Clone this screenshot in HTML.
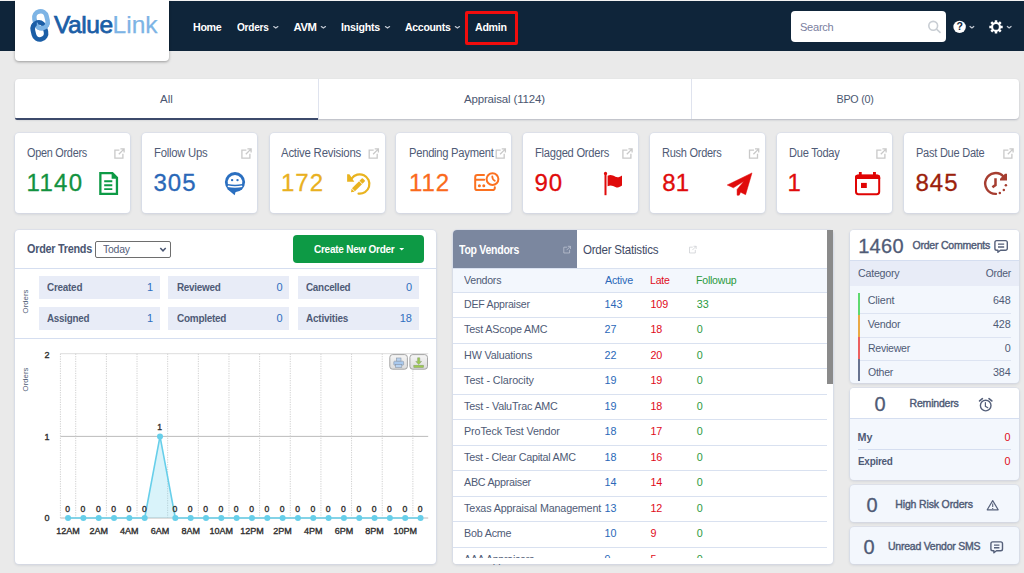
<!DOCTYPE html>
<html lang="en"><head><meta charset="utf-8"><title>ValueLink Dashboard</title>
<style>
html,body{margin:0;padding:0;}
body{width:1024px;height:573px;overflow:hidden;background:#eaeaea;font-family:"Liberation Sans",sans-serif;position:relative;}
.t{position:absolute;white-space:nowrap;}
.b{position:absolute;box-sizing:border-box;}
.card{position:absolute;box-sizing:border-box;background:#fff;border-radius:4px;box-shadow:0 0 0 .6px #d6dceb,0 1px 3px rgba(70,80,110,.2);}
svg{position:absolute;overflow:visible;}
</style></head><body>
<div class="b" style="left:0px;top:0px;width:1024px;height:2px;background:#f3f3f3;"></div>
<div class="b" style="left:0px;top:1.3px;width:1024px;height:50.2px;background:#0f253a;"></div>
<div class="b" style="left:15px;top:0px;width:154px;height:61px;background:#fff;border-radius:0 0 4px 4px;box-shadow:0 1px 3px rgba(0,0,0,.35);"></div>
<div class="b" style="left:465px;top:11px;width:53px;height:34px;border:3px solid #f20d0d;border-radius:2px;"></div>
<div class="b" style="left:791px;top:11px;width:155px;height:30.5px;background:#fff;border-radius:4px;"></div>
<div class="b" style="left:15px;top:79px;width:1004px;height:40px;background:#fff;border-radius:4px;box-shadow:0 1px 2px rgba(60,70,100,.30);"></div>
<div class="b" style="left:15px;top:117.5px;width:303px;height:2px;background:#3c4a6b;border-radius:0 0 0 3px;"></div>
<div class="b" style="left:318px;top:79px;width:1px;height:40px;background:#dfe3ee;"></div>
<div class="b" style="left:690.5px;top:79px;width:1px;height:40px;background:#dfe3ee;"></div>
<div class="card" style="left:15px;top:132.5px;width:115px;height:80.5px;"></div>
<div class="card" style="left:142px;top:132.5px;width:115px;height:80.5px;"></div>
<div class="card" style="left:269.5px;top:132.5px;width:115px;height:80.5px;"></div>
<div class="card" style="left:396px;top:132.5px;width:115px;height:80.5px;"></div>
<div class="card" style="left:523px;top:132.5px;width:115px;height:80.5px;"></div>
<div class="card" style="left:649.5px;top:132.5px;width:115px;height:80.5px;"></div>
<div class="card" style="left:777px;top:132.5px;width:115px;height:80.5px;"></div>
<div class="card" style="left:903.5px;top:132.5px;width:115px;height:80.5px;"></div>
<div class="card" style="left:15px;top:229.5px;width:421px;height:334.5px;"></div>
<div class="b" style="left:15px;top:268px;width:421px;height:1px;background:#d5def0;"></div>
<div class="b" style="left:15px;top:338px;width:421px;height:1px;background:#d5def0;"></div>
<div class="b" style="left:95px;top:241.2px;width:75.7px;height:16.4px;background:#fff;border:1.2px solid #6e6e6e;border-radius:2px;"></div>
<div class="b" style="left:293px;top:235px;width:131px;height:28px;background:#0d9a45;border-radius:4px;"></div>
<div class="b" style="left:38.5px;top:276.3px;width:121.2px;height:23px;background:#e8ecf7;"></div>
<div class="b" style="left:168.2px;top:276.3px;width:121.2px;height:23px;background:#e8ecf7;"></div>
<div class="b" style="left:298.2px;top:276.3px;width:121.2px;height:23px;background:#e8ecf7;"></div>
<div class="b" style="left:38.5px;top:307.1px;width:121.2px;height:23px;background:#e8ecf7;"></div>
<div class="b" style="left:168.2px;top:307.1px;width:121.2px;height:23px;background:#e8ecf7;"></div>
<div class="b" style="left:298.2px;top:307.1px;width:121.2px;height:23px;background:#e8ecf7;"></div>
<div class="card" style="left:453px;top:229.5px;width:380px;height:334.5px;overflow:hidden;"></div>
<div class="b" style="left:453px;top:229.5px;width:124px;height:38.5px;background:#7b879f;border-radius:4px 0 0 0;"></div>
<div class="b" style="left:453px;top:268px;width:374px;height:24.5px;background:#f3f7fd;"></div>
<div class="b" style="left:453px;top:267.6px;width:373.8px;height:1px;background:#d9e1f0;"></div>
<div class="b" style="left:453px;top:291.65px;width:373.8px;height:1px;background:#d9e1f0;"></div>
<div class="b" style="left:453px;top:317.15px;width:373.8px;height:1px;background:#d9e1f0;"></div>
<div class="b" style="left:453px;top:342.65px;width:373.8px;height:1px;background:#d9e1f0;"></div>
<div class="b" style="left:453px;top:368.15px;width:373.8px;height:1px;background:#d9e1f0;"></div>
<div class="b" style="left:453px;top:393.65px;width:373.8px;height:1px;background:#d9e1f0;"></div>
<div class="b" style="left:453px;top:419.15px;width:373.8px;height:1px;background:#d9e1f0;"></div>
<div class="b" style="left:453px;top:444.65px;width:373.8px;height:1px;background:#d9e1f0;"></div>
<div class="b" style="left:453px;top:470.15px;width:373.8px;height:1px;background:#d9e1f0;"></div>
<div class="b" style="left:453px;top:495.65px;width:373.8px;height:1px;background:#d9e1f0;"></div>
<div class="b" style="left:453px;top:521.15px;width:373.8px;height:1px;background:#d9e1f0;"></div>
<div class="b" style="left:453px;top:546.65px;width:373.8px;height:1px;background:#d9e1f0;"></div>
<div class="b" style="left:827px;top:229.5px;width:5.8px;height:154.3px;background:#8a8a8a;"></div>
<div class="card" style="left:850px;top:229.5px;width:169px;height:153px;background:#f3f7fd;"></div>
<div class="b" style="left:850px;top:229.5px;width:169px;height:31px;background:#fff;border-radius:4px 4px 0 0;"></div>
<div class="b" style="left:850px;top:260px;width:169px;height:25.5px;background:#e8ecf7;border-top:1px solid #d5def0;"></div>
<div class="b" style="left:858.2px;top:292.8px;width:2px;height:21.97px;background:#5fd96f;"></div>
<div class="b" style="left:858.2px;top:314.77px;width:2px;height:21.97px;background:#eaa945;"></div>
<div class="b" style="left:858.2px;top:336.74px;width:2px;height:21.97px;background:#ec6060;"></div>
<div class="b" style="left:858.2px;top:358.71000000000004px;width:2px;height:21.97px;background:#677390;"></div>
<div class="b" style="left:860.3px;top:313px;width:150.5px;height:1px;background:#dde4f2;"></div>
<div class="b" style="left:860.3px;top:336.5px;width:150.5px;height:1px;background:#dde4f2;"></div>
<div class="b" style="left:860.3px;top:360.3px;width:150.5px;height:1px;background:#dde4f2;"></div>
<div class="card" style="left:850px;top:388.1px;width:169px;height:91.6px;background:#f3f7fd;"></div>
<div class="b" style="left:850px;top:388.1px;width:169px;height:30.6px;background:#fff;border-radius:4px 4px 0 0;border-bottom:1px solid #d5def0;"></div>
<div class="b" style="left:857.6px;top:449px;width:153px;height:1px;background:#d5def0;"></div>
<div class="card" style="left:850px;top:485px;width:169px;height:36.5px;background:#f3f7fd;"></div>
<div class="card" style="left:850px;top:527px;width:169px;height:37px;background:#f3f7fd;"></div>
<svg width="1024" height="573" viewBox="0 0 1024 573" style="left:0;top:0;"><defs><clipPath id="lk"><path d="M36.8 22.6 H52 V33 H40.5 L36.8 30 Z"/></clipPath></defs><g fill="none" stroke-width="4.6"><path d="M6.2 -2.3 A6.2 6.2 0 0 0 -6.2 -2.3 V2.3 A6.2 6.2 0 0 0 6.2 2.3 Z" stroke="#7db4e5" transform="translate(41 19.75) rotate(-13)"/><path d="M4.89 -6.12 A6.2 6.2 0 0 0 -6.2 -2.3 V2.3 A6.2 6.2 0 0 0 6.2 2.3 V-0.2" stroke="#1b5ea6" stroke-linecap="round" transform="translate(39.4 31) rotate(-13)"/><g clip-path="url(#lk)"><path d="M6.2 -2.3 A6.2 6.2 0 0 0 -6.2 -2.3 V2.3 A6.2 6.2 0 0 0 6.2 2.3 Z" stroke="#7db4e5" transform="translate(41 19.75) rotate(-13)"/></g></g><path d="M273.70 26.55 L275.80 28.05 L277.90 26.55" fill="none" stroke="#c3cad4" stroke-width="1.2" stroke-linecap="round" stroke-linejoin="round"/><path d="M321.30 26.55 L323.40 28.05 L325.50 26.55" fill="none" stroke="#c3cad4" stroke-width="1.2" stroke-linecap="round" stroke-linejoin="round"/><path d="M385.40 26.55 L387.50 28.05 L389.60 26.55" fill="none" stroke="#c3cad4" stroke-width="1.2" stroke-linecap="round" stroke-linejoin="round"/><path d="M455.30 26.55 L457.40 28.05 L459.50 26.55" fill="none" stroke="#c3cad4" stroke-width="1.2" stroke-linecap="round" stroke-linejoin="round"/><path d="M970.05 26.45 L971.90 27.95 L973.75 26.45" fill="none" stroke="#c3cad4" stroke-width="1.2" stroke-linecap="round" stroke-linejoin="round"/><path d="M1007.35 26.45 L1009.20 27.95 L1011.05 26.45" fill="none" stroke="#c3cad4" stroke-width="1.2" stroke-linecap="round" stroke-linejoin="round"/><g fill="none" stroke="#c9ced4" stroke-width="1.6" stroke-linecap="round"><circle cx="933.2" cy="25.8" r="4.4"/><path d="M936.5 29.1 L940 32.4"/></g><circle cx="959.6" cy="26.9" r="6.2" fill="#fff"/><g fill="none" stroke="#fff"><circle cx="996" cy="26.9" r="3.9" stroke-width="2.1"/><path d="M1000.00 26.90 L1002.70 26.90 M998.83 29.73 L1000.74 31.64 M996.00 30.90 L996.00 33.60 M993.17 29.73 L991.26 31.64 M992.00 26.90 L989.30 26.90 M993.17 24.07 L991.26 22.16 M996.00 22.90 L996.00 20.20 M998.83 24.07 L1000.74 22.16 " stroke-width="2.5"/></g><path d="M119.40 150.10 H114.90 V158.10 H122.90 V153.80 M120.40 148.90 H124.10 V152.60 M123.90 149.10 L118.80 154.20" fill="none" stroke="#c9c9c9" stroke-width="1.30"/><path d="M246.40 150.10 H241.90 V158.10 H249.90 V153.80 M247.40 148.90 H251.10 V152.60 M250.90 149.10 L245.80 154.20" fill="none" stroke="#c9c9c9" stroke-width="1.30"/><path d="M373.70 150.10 H369.20 V158.10 H377.20 V153.80 M374.70 148.90 H378.40 V152.60 M378.20 149.10 L373.10 154.20" fill="none" stroke="#c9c9c9" stroke-width="1.30"/><path d="M500.70 150.10 H496.20 V158.10 H504.20 V153.80 M501.70 148.90 H505.40 V152.60 M505.20 149.10 L500.10 154.20" fill="none" stroke="#c9c9c9" stroke-width="1.30"/><path d="M627.40 150.10 H622.90 V158.10 H630.90 V153.80 M628.40 148.90 H632.10 V152.60 M631.90 149.10 L626.80 154.20" fill="none" stroke="#c9c9c9" stroke-width="1.30"/><path d="M754.00 150.10 H749.50 V158.10 H757.50 V153.80 M755.00 148.90 H758.70 V152.60 M758.50 149.10 L753.40 154.20" fill="none" stroke="#c9c9c9" stroke-width="1.30"/><path d="M881.40 150.10 H876.90 V158.10 H884.90 V153.80 M882.40 148.90 H886.10 V152.60 M885.90 149.10 L880.80 154.20" fill="none" stroke="#c9c9c9" stroke-width="1.30"/><path d="M1008.40 150.10 H1003.90 V158.10 H1011.90 V153.80 M1009.40 148.90 H1013.10 V152.60 M1012.90 149.10 L1007.80 154.20" fill="none" stroke="#c9c9c9" stroke-width="1.30"/><path d="M567.06 247.18 H563.81 V252.97 H569.60 V249.85 M567.79 246.31 H570.47 V248.98 M570.32 246.45 L566.63 250.14" fill="none" stroke="#c3c9d6" stroke-width="0.72"/><path d="M692.76 247.18 H689.51 V252.97 H695.30 V249.85 M693.49 246.31 H696.17 V248.98 M696.02 246.45 L692.33 250.14" fill="none" stroke="#c8cbd0" stroke-width="0.72"/><g fill="none" stroke="#0d9a45" stroke-width="2.3"><path d="M100.35 173.1 H112.4 L116.95 177.7 V193.85 H100.35 Z" stroke-linejoin="miter"/><path d="M104.2 181.3 H112.3 M104.2 185.2 H112.3 M104.2 189.1 H112.3" stroke-width="1.9"/></g><path d="M111.6 172.2 L118 178.7 H111.6 Z" fill="#0d9a45"/><g><circle cx="235" cy="182.1" r="10.1" fill="#2a6fc0"/><path d="M226.6 188.6 L234.7 195.2 L235.8 190.8 Z" fill="#2a6fc0"/><path d="M227.9 184 A7.3 7.3 0 1 1 242.1 184 Q235 185.3 227.9 184 Z" fill="#fff"/><circle cx="232.1" cy="180.1" r="1.2" fill="#2a6fc0"/><circle cx="237.5" cy="180.1" r="1.2" fill="#2a6fc0"/><path d="M227.8 186.3 Q235 187.9 242.2 186.3" fill="none" stroke="#fff" stroke-width="1.5"/></g><path d="M351.75 178.44 A9.7 9.7 0 1 1 358.52 193.63" fill="none" stroke="#e9b31f" stroke-width="2.2" stroke-linecap="round"/><path d="M347.1 174.3 H349.4 L354.3 181.8 H347.1 Z" fill="#e9b31f"/><path d="M351.00 192.20 L354.54 191.63 L351.57 188.66 Z" fill="#e9b31f"/><path d="M354.96 191.21 L362.03 184.14 L359.06 181.17 L351.99 188.24 Z" fill="#e9b31f"/><path d="M362.46 183.71 L364.72 181.45 Q365.28 180.88 364.72 180.32 L362.88 178.48 Q362.32 177.92 361.75 178.48 L359.49 180.74 Z" fill="#e9b31f"/><g fill="none" stroke="#fb7120" stroke-width="2" stroke-linecap="round"><path d="M484 175 H477.4 A2.2 2.2 0 0 0 475.2 177.2 V187.9 A2.2 2.2 0 0 0 477.4 190.1 H492.6 A2.2 2.2 0 0 0 494.8 187.9 V187.2"/><path d="M476 179.8 H484.2"/><circle cx="492.5" cy="179.1" r="5.9"/><path d="M492.3 176.4 C492.2 178.6 493.2 179.8 494.8 180.8" stroke-width="1.8"/></g><circle cx="479.4" cy="185.7" r="1.5" fill="#fb7120"/><circle cx="483.8" cy="185.7" r="1.5" fill="#fb7120"/><g fill="#e00b0b"><rect x="604.5" y="173.2" width="2" height="22"/><circle cx="605.5" cy="173.4" r="1.6"/><path d="M607.6 175.8 C610.6 174.2 613 175.6 615.4 176.8 C617.8 177.9 619.8 177 622 175.4 V185.6 C619.8 187.2 617.8 188 615.4 186.9 C613 185.7 610.6 184.6 607.6 186.2 Z"/></g><path d="M752 172.9 L727.2 185 L733.4 187.8 L743.8 181.2 L737.1 189.4 V195.2 H739.2 L740.6 192.2 L745.6 194.7 Z" fill="#e00b0b" stroke="#e00b0b" stroke-width="0.5" stroke-linejoin="round"/><g><rect x="856" y="175.6" width="23.2" height="18.6" rx="2.4" fill="none" stroke="#e00404" stroke-width="2"/><path d="M855 179 V177.4 A2.6 2.6 0 0 1 857.6 174.8 H877.6 A2.6 2.6 0 0 1 880.2 177.4 V179 Z" fill="#e00404"/><rect x="858.9" y="172" width="2.8" height="4" fill="#e00404"/><rect x="873" y="172" width="2.9" height="4" fill="#e00404"/><rect x="861" y="182.9" width="5.8" height="5.1" fill="#e00404"/></g><g fill="none" stroke="#a63d30" stroke-width="2.4"><path d="M1003.57 176.82 A10.4 10.4 0 1 0 995.96 193.89" stroke-linecap="round"/><path d="M995.5 178.2 V185 L992.4 187.3" stroke-width="2.5"/></g><circle cx="999.83" cy="193.00" r="1.25" fill="#a63d30"/><circle cx="1003.80" cy="189.90" r="1.25" fill="#a63d30"/><circle cx="1005.87" cy="185.13" r="1.25" fill="#a63d30"/><path d="M1007 173.7 V180.6 H1000 V178.8 L1005 173.7 Z" fill="#a63d30"/><path d="M160.3 248 L163 250.8 L165.7 248" fill="none" stroke="#4a5672" stroke-width="1.5"/><path d="M399.2 248 H404.2 L401.7 250.6 Z" fill="#fff"/><path d="M996.70 240.60 H1005.50 A1.8 1.8 0 0 1 1007.30 242.40 V248.40 A1.8 1.8 0 0 1 1005.50 250.20 H1000.50 L997.90 252.30 V250.20 H996.70 A1.8 1.8 0 0 1 994.90 248.40 V242.40 A1.8 1.8 0 0 1 996.70 240.60 Z" fill="none" stroke="#55607a" stroke-width="1.4" stroke-linejoin="round"/><path d="M998.00 244.15 H1004.20 M998.00 246.94 H1004.20" fill="none" stroke="#55607a" stroke-width="1.4"/><path d="M992.70 541.90 H1000.70 A1.8 1.8 0 0 1 1002.50 543.70 V548.90 A1.8 1.8 0 0 1 1000.70 550.70 H996.50 L993.90 552.80 V550.70 H992.70 A1.8 1.8 0 0 1 990.90 548.90 V543.70 A1.8 1.8 0 0 1 992.70 541.90 Z" fill="none" stroke="#55607a" stroke-width="1.4" stroke-linejoin="round"/><path d="M994.00 545.16 H999.40 M994.00 547.71 H999.40" fill="none" stroke="#55607a" stroke-width="1.4"/><g fill="none" stroke="#55607a" stroke-width="1.4" stroke-linecap="round"><circle cx="985.7" cy="405.6" r="5.3"/><path d="M985.4 402.6 V406.4 L987.8 407.7" stroke-width="1.2"/><path d="M979.6 400.9 L982.4 398.7 M991.8 400.9 L989 398.7" stroke-width="1.7"/></g><g fill="none" stroke="#55607a" stroke-width="1.15" stroke-linejoin="round"><path d="M992.7 500.6 L998.2 509.8 H987.2 Z"/><path d="M992.7 503.6 V507" stroke-width="1.1"/><path d="M992.7 508 V508.9" stroke-width="1.1"/></g></svg>
<div class="t" style="left:956.4px;top:20.3px;font-size:10.5px;line-height:13px;font-weight:700;color:#0f253a;width:6.4px;text-align:center;">?</div>
<svg width="1024" height="573" viewBox="0 0 1024 573" style="left:0;top:0;"><path d="M60.4 353.7 H428.2" stroke="#dddddd" stroke-width="1" fill="none"/><path d="M60.4 436.4 H428.2" stroke="#b4b4b4" stroke-width="0.9" fill="none"/><path d="M60.4 518.0 H428.2" stroke="#b4b4b4" stroke-width="0.9" fill="none"/><path d="M60.4 353.7 V518.0 M75.72 353.7 V518.0 M106.38 353.7 V518.0 M137.03 353.7 V518.0 M167.68 353.7 V518.0 M198.33 353.7 V518.0 M228.98 353.7 V518.0 M259.62 353.7 V518.0 M290.28 353.7 V518.0 M320.93 353.7 V518.0 M351.57 353.7 V518.0 M382.23 353.7 V518.0 M412.88 353.7 V518.0 " stroke="#cfcfcf" stroke-width="1" stroke-dasharray="1.2 1.2" fill="none"/><polygon points="68.06,518.0 68.06,518.00 83.39,518.00 98.71,518.00 114.04,518.00 129.36,518.00 144.69,518.00 160.01,436.40 175.34,518.00 190.66,518.00 205.99,518.00 221.31,518.00 236.64,518.00 251.96,518.00 267.29,518.00 282.61,518.00 297.94,518.00 313.26,518.00 328.59,518.00 343.91,518.00 359.24,518.00 374.56,518.00 389.89,518.00 405.21,518.00 420.54,518.00 420.54,518.0" fill="#67cfea" fill-opacity="0.25"/><polyline points="68.06,518.00 83.39,518.00 98.71,518.00 114.04,518.00 129.36,518.00 144.69,518.00 160.01,436.40 175.34,518.00 190.66,518.00 205.99,518.00 221.31,518.00 236.64,518.00 251.96,518.00 267.29,518.00 282.61,518.00 297.94,518.00 313.26,518.00 328.59,518.00 343.91,518.00 359.24,518.00 374.56,518.00 389.89,518.00 405.21,518.00 420.54,518.00" fill="none" stroke="#67cfea" stroke-width="1.6" stroke-linejoin="round"/><circle cx="68.06" cy="518.00" r="3" fill="#67cfea"/><circle cx="83.39" cy="518.00" r="3" fill="#67cfea"/><circle cx="98.71" cy="518.00" r="3" fill="#67cfea"/><circle cx="114.04" cy="518.00" r="3" fill="#67cfea"/><circle cx="129.36" cy="518.00" r="3" fill="#67cfea"/><circle cx="144.69" cy="518.00" r="3" fill="#67cfea"/><circle cx="160.01" cy="436.40" r="3" fill="#67cfea"/><circle cx="175.34" cy="518.00" r="3" fill="#67cfea"/><circle cx="190.66" cy="518.00" r="3" fill="#67cfea"/><circle cx="205.99" cy="518.00" r="3" fill="#67cfea"/><circle cx="221.31" cy="518.00" r="3" fill="#67cfea"/><circle cx="236.64" cy="518.00" r="3" fill="#67cfea"/><circle cx="251.96" cy="518.00" r="3" fill="#67cfea"/><circle cx="267.29" cy="518.00" r="3" fill="#67cfea"/><circle cx="282.61" cy="518.00" r="3" fill="#67cfea"/><circle cx="297.94" cy="518.00" r="3" fill="#67cfea"/><circle cx="313.26" cy="518.00" r="3" fill="#67cfea"/><circle cx="328.59" cy="518.00" r="3" fill="#67cfea"/><circle cx="343.91" cy="518.00" r="3" fill="#67cfea"/><circle cx="359.24" cy="518.00" r="3" fill="#67cfea"/><circle cx="374.56" cy="518.00" r="3" fill="#67cfea"/><circle cx="389.89" cy="518.00" r="3" fill="#67cfea"/><circle cx="405.21" cy="518.00" r="3" fill="#67cfea"/><circle cx="420.54" cy="518.00" r="3" fill="#67cfea"/><text x="67.66" y="512.00" font-size="8.6" text-anchor="middle" font-family="Liberation Sans, sans-serif" fill="#2e2e2e" stroke="#2e2e2e" stroke-width="0.35">0</text><text x="82.99" y="512.00" font-size="8.6" text-anchor="middle" font-family="Liberation Sans, sans-serif" fill="#2e2e2e" stroke="#2e2e2e" stroke-width="0.35">0</text><text x="98.31" y="512.00" font-size="8.6" text-anchor="middle" font-family="Liberation Sans, sans-serif" fill="#2e2e2e" stroke="#2e2e2e" stroke-width="0.35">0</text><text x="113.64" y="512.00" font-size="8.6" text-anchor="middle" font-family="Liberation Sans, sans-serif" fill="#2e2e2e" stroke="#2e2e2e" stroke-width="0.35">0</text><text x="128.96" y="512.00" font-size="8.6" text-anchor="middle" font-family="Liberation Sans, sans-serif" fill="#2e2e2e" stroke="#2e2e2e" stroke-width="0.35">0</text><text x="144.29" y="512.00" font-size="8.6" text-anchor="middle" font-family="Liberation Sans, sans-serif" fill="#2e2e2e" stroke="#2e2e2e" stroke-width="0.35">0</text><text x="159.61" y="430.40" font-size="8.6" text-anchor="middle" font-family="Liberation Sans, sans-serif" fill="#2e2e2e" stroke="#2e2e2e" stroke-width="0.35">1</text><text x="174.94" y="512.00" font-size="8.6" text-anchor="middle" font-family="Liberation Sans, sans-serif" fill="#2e2e2e" stroke="#2e2e2e" stroke-width="0.35">0</text><text x="190.26" y="512.00" font-size="8.6" text-anchor="middle" font-family="Liberation Sans, sans-serif" fill="#2e2e2e" stroke="#2e2e2e" stroke-width="0.35">0</text><text x="205.59" y="512.00" font-size="8.6" text-anchor="middle" font-family="Liberation Sans, sans-serif" fill="#2e2e2e" stroke="#2e2e2e" stroke-width="0.35">0</text><text x="220.91" y="512.00" font-size="8.6" text-anchor="middle" font-family="Liberation Sans, sans-serif" fill="#2e2e2e" stroke="#2e2e2e" stroke-width="0.35">0</text><text x="236.24" y="512.00" font-size="8.6" text-anchor="middle" font-family="Liberation Sans, sans-serif" fill="#2e2e2e" stroke="#2e2e2e" stroke-width="0.35">0</text><text x="251.56" y="512.00" font-size="8.6" text-anchor="middle" font-family="Liberation Sans, sans-serif" fill="#2e2e2e" stroke="#2e2e2e" stroke-width="0.35">0</text><text x="266.89" y="512.00" font-size="8.6" text-anchor="middle" font-family="Liberation Sans, sans-serif" fill="#2e2e2e" stroke="#2e2e2e" stroke-width="0.35">0</text><text x="282.21" y="512.00" font-size="8.6" text-anchor="middle" font-family="Liberation Sans, sans-serif" fill="#2e2e2e" stroke="#2e2e2e" stroke-width="0.35">0</text><text x="297.54" y="512.00" font-size="8.6" text-anchor="middle" font-family="Liberation Sans, sans-serif" fill="#2e2e2e" stroke="#2e2e2e" stroke-width="0.35">0</text><text x="312.86" y="512.00" font-size="8.6" text-anchor="middle" font-family="Liberation Sans, sans-serif" fill="#2e2e2e" stroke="#2e2e2e" stroke-width="0.35">0</text><text x="328.19" y="512.00" font-size="8.6" text-anchor="middle" font-family="Liberation Sans, sans-serif" fill="#2e2e2e" stroke="#2e2e2e" stroke-width="0.35">0</text><text x="343.51" y="512.00" font-size="8.6" text-anchor="middle" font-family="Liberation Sans, sans-serif" fill="#2e2e2e" stroke="#2e2e2e" stroke-width="0.35">0</text><text x="358.84" y="512.00" font-size="8.6" text-anchor="middle" font-family="Liberation Sans, sans-serif" fill="#2e2e2e" stroke="#2e2e2e" stroke-width="0.35">0</text><text x="374.16" y="512.00" font-size="8.6" text-anchor="middle" font-family="Liberation Sans, sans-serif" fill="#2e2e2e" stroke="#2e2e2e" stroke-width="0.35">0</text><text x="389.49" y="512.00" font-size="8.6" text-anchor="middle" font-family="Liberation Sans, sans-serif" fill="#2e2e2e" stroke="#2e2e2e" stroke-width="0.35">0</text><text x="404.81" y="512.00" font-size="8.6" text-anchor="middle" font-family="Liberation Sans, sans-serif" fill="#2e2e2e" stroke="#2e2e2e" stroke-width="0.35">0</text><text x="420.14" y="512.00" font-size="8.6" text-anchor="middle" font-family="Liberation Sans, sans-serif" fill="#2e2e2e" stroke="#2e2e2e" stroke-width="0.35">0</text><text x="68.06" y="534" font-size="9" text-anchor="middle" font-family="Liberation Sans, sans-serif" fill="#2e2e2e" stroke="#2e2e2e" stroke-width="0.35">12AM</text><text x="98.71" y="534" font-size="9" text-anchor="middle" font-family="Liberation Sans, sans-serif" fill="#2e2e2e" stroke="#2e2e2e" stroke-width="0.35">2AM</text><text x="129.36" y="534" font-size="9" text-anchor="middle" font-family="Liberation Sans, sans-serif" fill="#2e2e2e" stroke="#2e2e2e" stroke-width="0.35">4AM</text><text x="160.01" y="534" font-size="9" text-anchor="middle" font-family="Liberation Sans, sans-serif" fill="#2e2e2e" stroke="#2e2e2e" stroke-width="0.35">6AM</text><text x="190.66" y="534" font-size="9" text-anchor="middle" font-family="Liberation Sans, sans-serif" fill="#2e2e2e" stroke="#2e2e2e" stroke-width="0.35">8AM</text><text x="221.31" y="534" font-size="9" text-anchor="middle" font-family="Liberation Sans, sans-serif" fill="#2e2e2e" stroke="#2e2e2e" stroke-width="0.35">10AM</text><text x="251.96" y="534" font-size="9" text-anchor="middle" font-family="Liberation Sans, sans-serif" fill="#2e2e2e" stroke="#2e2e2e" stroke-width="0.35">12PM</text><text x="282.61" y="534" font-size="9" text-anchor="middle" font-family="Liberation Sans, sans-serif" fill="#2e2e2e" stroke="#2e2e2e" stroke-width="0.35">2PM</text><text x="313.26" y="534" font-size="9" text-anchor="middle" font-family="Liberation Sans, sans-serif" fill="#2e2e2e" stroke="#2e2e2e" stroke-width="0.35">4PM</text><text x="343.91" y="534" font-size="9" text-anchor="middle" font-family="Liberation Sans, sans-serif" fill="#2e2e2e" stroke="#2e2e2e" stroke-width="0.35">6PM</text><text x="374.56" y="534" font-size="9" text-anchor="middle" font-family="Liberation Sans, sans-serif" fill="#2e2e2e" stroke="#2e2e2e" stroke-width="0.35">8PM</text><text x="405.21" y="534" font-size="9" text-anchor="middle" font-family="Liberation Sans, sans-serif" fill="#2e2e2e" stroke="#2e2e2e" stroke-width="0.35">10PM</text><text x="49.4" y="357.90" font-size="9" text-anchor="end" font-family="Liberation Sans, sans-serif" fill="#2e2e2e" stroke="#2e2e2e" stroke-width="0.35">2</text><text x="49.4" y="439.60" font-size="9" text-anchor="end" font-family="Liberation Sans, sans-serif" fill="#2e2e2e" stroke="#2e2e2e" stroke-width="0.35">1</text><text x="49.4" y="521.20" font-size="9" text-anchor="end" font-family="Liberation Sans, sans-serif" fill="#2e2e2e" stroke="#2e2e2e" stroke-width="0.35">0</text><defs><linearGradient id="bg1" x1="0" y1="0" x2="0" y2="1"><stop offset="0" stop-color="#f6f6f6"/><stop offset="1" stop-color="#dcdcdc"/></linearGradient></defs><rect x="389.8" y="354.6" width="17.6" height="14.6" rx="2.8" fill="url(#bg1)" stroke="#9c9c9c" stroke-width="0.9"/><rect x="409.9" y="354.6" width="17.6" height="14.6" rx="2.8" fill="url(#bg1)" stroke="#9c9c9c" stroke-width="0.9"/><g stroke="#8a96a6" stroke-width="0.6"><rect x="396.4" y="358" width="4.6" height="3.4" fill="#b9d3f0"/><rect x="393.8" y="361.2" width="9.8" height="4" rx="0.8" fill="#a9c9ee"/><rect x="395.6" y="364.6" width="6.2" height="2.8" fill="#b9d3f0"/></g><g fill="#9ccb4e" stroke="#8a9a7a" stroke-width="0.5"><path d="M417.6 357.8 H419.8 V361.4 H421.6 L418.7 364.6 L415.8 361.4 H417.6 Z"/><rect x="413.8" y="365.2" width="9.8" height="2.4"/></g></svg>
<div class="t" id="t0" style="top:19.00px;font-size:11.25px;line-height:16px;color:#ffffff;font-weight:700;letter-spacing:-0.352px;left:192.60px;transform-origin:0 50%;transform:scaleX(0.9511);">Home</div>
<div class="t" id="t1" style="top:19.00px;font-size:11.25px;line-height:16px;color:#ffffff;font-weight:700;letter-spacing:-0.277px;left:236.80px;transform-origin:0 50%;transform:scaleX(0.8937);">Orders</div>
<div class="t" id="t2" style="top:19.00px;font-size:11.25px;line-height:16px;color:#ffffff;font-weight:700;letter-spacing:-0.391px;left:293.60px;">AVM</div>
<div class="t" id="t3" style="top:19.00px;font-size:11.25px;line-height:16px;color:#ffffff;font-weight:700;letter-spacing:-0.243px;left:341.40px;transform-origin:0 50%;transform:scaleX(0.9466);">Insights</div>
<div class="t" id="t4" style="top:19.00px;font-size:11.25px;line-height:16px;color:#ffffff;font-weight:700;letter-spacing:-0.288px;left:405.00px;transform-origin:0 50%;transform:scaleX(0.9294);">Accounts</div>
<div class="t" id="t5" style="top:19.00px;font-size:11.25px;line-height:16px;color:#ffffff;font-weight:700;letter-spacing:-0.315px;left:475.40px;transform-origin:0 50%;transform:scaleX(0.9454);">Admin</div>
<div class="t" id="t6" style="top:19.00px;font-size:11.5px;line-height:16px;color:#7a80a0;letter-spacing:-0.273px;left:800.00px;transform-origin:0 50%;transform:scaleX(0.9627);">Search</div>
<div class="t" id="t7" style="top:8.30px;font-size:24.5px;line-height:34px;color:#1b5ea6;letter-spacing:-0.409px;left:54.00px;-webkit-text-stroke:0.75px #1b5ea6;">Value</div>
<div class="t" id="t8" style="top:8.30px;font-size:24.5px;line-height:34px;color:#7db4e5;letter-spacing:0.012px;left:112.60px;-webkit-text-stroke:0.25px #7db4e5;">Link</div>
<div class="t" id="t9" style="top:90.90px;font-size:11.5px;line-height:16px;color:#4b5771;left:166.50px;transform:translateX(-50%);">All</div>
<div class="t" id="t10" style="top:90.90px;font-size:11.5px;line-height:16px;color:#4b5771;letter-spacing:-0.158px;left:504.50px;transform:translateX(-50%);margin-left:-0.08px;">Appraisal (1124)</div>
<div class="t" id="t11" style="top:90.90px;font-size:11.5px;line-height:16px;color:#4b5771;letter-spacing:-0.267px;left:855.00px;transform:translateX(-50%) scaleX(0.9325);margin-left:-0.13px;">BPO (0)</div>
<div class="t" id="t12" style="top:144.50px;font-size:12px;line-height:17px;color:#4f5b76;letter-spacing:-0.284px;left:27.00px;transform-origin:0 50%;transform:scaleX(0.9056);">Open Orders</div>
<div class="t" id="t13" style="top:165.80px;font-size:24px;line-height:34px;color:#13923f;left:26.60px;letter-spacing:1.3px;-webkit-text-stroke:0.3px #13923f;">1140</div>
<div class="t" id="t14" style="top:144.50px;font-size:12px;line-height:17px;color:#4f5b76;letter-spacing:-0.267px;left:154.00px;transform-origin:0 50%;transform:scaleX(0.9438);">Follow Ups</div>
<div class="t" id="t15" style="top:165.80px;font-size:24px;line-height:34px;color:#2a68b8;left:153.50px;letter-spacing:1px;-webkit-text-stroke:0.3px #2a68b8;">305</div>
<div class="t" id="t16" style="top:144.50px;font-size:12px;line-height:17px;color:#4f5b76;letter-spacing:-0.248px;left:281.00px;transform-origin:0 50%;transform:scaleX(0.9516);">Active Revisions</div>
<div class="t" id="t17" style="top:165.80px;font-size:24px;line-height:34px;color:#e9b020;left:281.00px;letter-spacing:1px;-webkit-text-stroke:0.3px #e9b020;">172</div>
<div class="t" id="t18" style="top:144.50px;font-size:12px;line-height:17px;color:#4f5b76;letter-spacing:-0.284px;left:408.50px;transform-origin:0 50%;transform:scaleX(0.9340);">Pending Payment</div>
<div class="t" id="t19" style="top:165.80px;font-size:24px;line-height:34px;color:#fa6a1c;left:408.90px;letter-spacing:1px;-webkit-text-stroke:0.3px #fa6a1c;">112</div>
<div class="t" id="t20" style="top:144.50px;font-size:12px;line-height:17px;color:#4f5b76;letter-spacing:-0.268px;left:535.00px;transform-origin:0 50%;transform:scaleX(0.9294);">Flagged Orders</div>
<div class="t" id="t21" style="top:165.80px;font-size:24px;line-height:34px;color:#e00b0b;left:534.50px;letter-spacing:1px;-webkit-text-stroke:0.3px #e00b0b;">90</div>
<div class="t" id="t22" style="top:144.50px;font-size:12px;line-height:17px;color:#4f5b76;letter-spacing:-0.278px;left:662.00px;transform-origin:0 50%;transform:scaleX(0.9158);">Rush Orders</div>
<div class="t" id="t23" style="top:165.80px;font-size:24px;line-height:34px;color:#e00b0b;left:662.20px;letter-spacing:0.2px;-webkit-text-stroke:0.3px #e00b0b;">81</div>
<div class="t" id="t24" style="top:144.50px;font-size:12px;line-height:17px;color:#4f5b76;letter-spacing:-0.286px;left:789.00px;transform-origin:0 50%;transform:scaleX(0.9252);">Due Today</div>
<div class="t" id="t25" style="top:165.80px;font-size:24px;line-height:34px;color:#e00b0b;left:787.50px;letter-spacing:1px;-webkit-text-stroke:0.3px #e00b0b;">1</div>
<div class="t" id="t26" style="top:144.50px;font-size:12px;line-height:17px;color:#4f5b76;letter-spacing:-0.270px;left:916.00px;transform-origin:0 50%;transform:scaleX(0.9190);">Past Due Date</div>
<div class="t" id="t27" style="top:165.80px;font-size:24px;line-height:34px;color:#9c1f0c;left:915.50px;letter-spacing:1px;-webkit-text-stroke:0.3px #9c1f0c;">845</div>
<div class="t" id="t28" style="top:240.80px;font-size:12px;line-height:17px;color:#4b5773;font-weight:700;letter-spacing:-0.283px;left:27.00px;transform-origin:0 50%;transform:scaleX(0.9032);">Order Trends</div>
<div class="t" id="t29" style="top:242.40px;font-size:11px;line-height:15px;color:#55607a;letter-spacing:-0.264px;left:103.30px;transform-origin:0 50%;transform:scaleX(0.9523);">Today</div>
<div class="t" id="t30" style="top:241.00px;font-size:11.5px;line-height:16px;color:#fff;font-weight:700;letter-spacing:-0.273px;left:313.50px;transform-origin:0 50%;transform:scaleX(0.8676);">Create New Order</div>
<div class="t" id="t31" style="top:280.00px;font-size:11px;line-height:15px;color:#4f5b76;font-weight:700;letter-spacing:-0.263px;left:47.00px;transform-origin:0 50%;transform:scaleX(0.8997);">Created</div>
<div class="t" id="t32" style="top:280.00px;font-size:11px;line-height:15px;color:#2f6fc0;right:871.00px;">1</div>
<div class="t" id="t33" style="top:280.00px;font-size:11px;line-height:15px;color:#4f5b76;font-weight:700;letter-spacing:-0.285px;left:176.50px;transform-origin:0 50%;transform:scaleX(0.8975);">Reviewed</div>
<div class="t" id="t34" style="top:280.00px;font-size:11px;line-height:15px;color:#2f6fc0;right:741.50px;">0</div>
<div class="t" id="t35" style="top:280.00px;font-size:11px;line-height:15px;color:#4f5b76;font-weight:700;letter-spacing:-0.260px;left:306.00px;transform-origin:0 50%;transform:scaleX(0.8946);">Cancelled</div>
<div class="t" id="t36" style="top:280.00px;font-size:11px;line-height:15px;color:#2f6fc0;right:612.00px;">0</div>
<div class="t" id="t37" style="top:310.80px;font-size:11px;line-height:15px;color:#4f5b76;font-weight:700;letter-spacing:-0.279px;left:47.00px;transform-origin:0 50%;transform:scaleX(0.8924);">Assigned</div>
<div class="t" id="t38" style="top:310.80px;font-size:11px;line-height:15px;color:#2f6fc0;right:871.00px;">1</div>
<div class="t" id="t39" style="top:310.80px;font-size:11px;line-height:15px;color:#4f5b76;font-weight:700;letter-spacing:-0.284px;left:176.50px;transform-origin:0 50%;transform:scaleX(0.9063);">Completed</div>
<div class="t" id="t40" style="top:310.80px;font-size:11px;line-height:15px;color:#2f6fc0;right:741.50px;">0</div>
<div class="t" id="t41" style="top:310.80px;font-size:11px;line-height:15px;color:#4f5b76;font-weight:700;letter-spacing:-0.220px;left:306.00px;transform-origin:0 50%;transform:scaleX(0.9032);">Activities</div>
<div class="t" id="t42" style="top:310.80px;font-size:11px;line-height:15px;color:#2f6fc0;right:612.00px;">18</div>
<div class="t" id="t43" style="top:295.50px;font-size:7.8px;line-height:11px;color:#4f5b76;left:25.20px;transform:translateX(-50%);transform:translateX(-50%) rotate(-90deg);">Orders</div>
<div class="t" id="t44" style="top:373.50px;font-size:7.8px;line-height:11px;color:#4f5b76;left:25.20px;transform:translateX(-50%);transform:translateX(-50%) rotate(-90deg);">Orders</div>
<div class="t" id="t45" style="top:241.50px;font-size:12px;line-height:17px;color:#fff;font-weight:700;letter-spacing:-0.294px;left:458.80px;transform-origin:0 50%;transform:scaleX(0.8751);">Top Vendors</div>
<div class="t" id="t46" style="top:241.00px;font-size:13px;line-height:18px;color:#3f4b66;letter-spacing:-0.250px;left:583.30px;transform-origin:0 50%;transform:scaleX(0.8873);">Order Statistics</div>
<div class="t" id="t47" style="top:271.90px;font-size:11.25px;line-height:16px;color:#4f5b76;letter-spacing:-0.265px;left:464.10px;transform-origin:0 50%;transform:scaleX(0.9436);">Vendors</div>
<div class="t" id="t48" style="top:271.90px;font-size:11.25px;line-height:16px;color:#2a68b8;letter-spacing:-0.230px;left:604.90px;transform-origin:0 50%;transform:scaleX(0.9535);">Active</div>
<div class="t" id="t49" style="top:271.90px;font-size:11.25px;line-height:16px;color:#e00b1a;letter-spacing:-0.246px;left:650.40px;transform-origin:0 50%;transform:scaleX(0.9369);">Late</div>
<div class="t" id="t50" style="top:271.90px;font-size:11.25px;line-height:16px;color:#2b9a3e;letter-spacing:-0.253px;left:696.40px;transform-origin:0 50%;transform:scaleX(0.9418);">Followup</div>
<div class="t" id="t51" style="top:297.00px;font-size:10.75px;line-height:15px;color:#4f5b76;letter-spacing:-0.242px;left:464.10px;transform-origin:0 50%;transform:scaleX(0.9841);">DEF Appraiser</div>
<div class="t" id="t52" style="top:297.00px;font-size:10.75px;line-height:15px;color:#2a68b8;left:604.50px;">143</div>
<div class="t" id="t53" style="top:297.00px;font-size:10.75px;line-height:15px;color:#e00b1a;left:650.40px;">109</div>
<div class="t" id="t54" style="top:297.00px;font-size:10.75px;line-height:15px;color:#2b9a3e;left:696.70px;">33</div>
<div class="t" id="t55" style="top:322.47px;font-size:10.75px;line-height:15px;color:#4f5b76;letter-spacing:-0.183px;left:464.10px;">Test AScope AMC</div>
<div class="t" id="t56" style="top:322.47px;font-size:10.75px;line-height:15px;color:#2a68b8;left:604.50px;">27</div>
<div class="t" id="t57" style="top:322.47px;font-size:10.75px;line-height:15px;color:#e00b1a;left:650.40px;">18</div>
<div class="t" id="t58" style="top:322.47px;font-size:10.75px;line-height:15px;color:#2b9a3e;left:696.70px;">0</div>
<div class="t" id="t59" style="top:347.94px;font-size:10.75px;line-height:15px;color:#4f5b76;letter-spacing:-0.178px;left:464.10px;">HW Valuations</div>
<div class="t" id="t60" style="top:347.94px;font-size:10.75px;line-height:15px;color:#2a68b8;left:604.50px;">22</div>
<div class="t" id="t61" style="top:347.94px;font-size:10.75px;line-height:15px;color:#e00b1a;left:650.40px;">20</div>
<div class="t" id="t62" style="top:347.94px;font-size:10.75px;line-height:15px;color:#2b9a3e;left:696.70px;">0</div>
<div class="t" id="t63" style="top:373.41px;font-size:10.75px;line-height:15px;color:#4f5b76;letter-spacing:-0.081px;left:464.10px;">Test - Clarocity</div>
<div class="t" id="t64" style="top:373.41px;font-size:10.75px;line-height:15px;color:#2a68b8;left:604.50px;">19</div>
<div class="t" id="t65" style="top:373.41px;font-size:10.75px;line-height:15px;color:#e00b1a;left:650.40px;">19</div>
<div class="t" id="t66" style="top:373.41px;font-size:10.75px;line-height:15px;color:#2b9a3e;left:696.70px;">0</div>
<div class="t" id="t67" style="top:398.88px;font-size:10.75px;line-height:15px;color:#4f5b76;letter-spacing:-0.199px;left:464.10px;">Test - ValuTrac AMC</div>
<div class="t" id="t68" style="top:398.88px;font-size:10.75px;line-height:15px;color:#2a68b8;left:604.50px;">19</div>
<div class="t" id="t69" style="top:398.88px;font-size:10.75px;line-height:15px;color:#e00b1a;left:650.40px;">18</div>
<div class="t" id="t70" style="top:398.88px;font-size:10.75px;line-height:15px;color:#2b9a3e;left:696.70px;">0</div>
<div class="t" id="t71" style="top:424.35px;font-size:10.75px;line-height:15px;color:#4f5b76;letter-spacing:-0.148px;left:464.10px;">ProTeck Test Vendor</div>
<div class="t" id="t72" style="top:424.35px;font-size:10.75px;line-height:15px;color:#2a68b8;left:604.50px;">18</div>
<div class="t" id="t73" style="top:424.35px;font-size:10.75px;line-height:15px;color:#e00b1a;left:650.40px;">17</div>
<div class="t" id="t74" style="top:424.35px;font-size:10.75px;line-height:15px;color:#2b9a3e;left:696.70px;">0</div>
<div class="t" id="t75" style="top:449.82px;font-size:10.75px;line-height:15px;color:#4f5b76;letter-spacing:-0.254px;left:464.10px;">Test - Clear Capital AMC</div>
<div class="t" id="t76" style="top:449.82px;font-size:10.75px;line-height:15px;color:#2a68b8;left:604.50px;">18</div>
<div class="t" id="t77" style="top:449.82px;font-size:10.75px;line-height:15px;color:#e00b1a;left:650.40px;">16</div>
<div class="t" id="t78" style="top:449.82px;font-size:10.75px;line-height:15px;color:#2b9a3e;left:696.70px;">0</div>
<div class="t" id="t79" style="top:475.29px;font-size:10.75px;line-height:15px;color:#4f5b76;letter-spacing:-0.286px;left:464.10px;">ABC Appraiser</div>
<div class="t" id="t80" style="top:475.29px;font-size:10.75px;line-height:15px;color:#2a68b8;left:604.50px;">14</div>
<div class="t" id="t81" style="top:475.29px;font-size:10.75px;line-height:15px;color:#e00b1a;left:650.40px;">14</div>
<div class="t" id="t82" style="top:475.29px;font-size:10.75px;line-height:15px;color:#2b9a3e;left:696.70px;">0</div>
<div class="t" id="t83" style="top:500.76px;font-size:10.75px;line-height:15px;color:#4f5b76;letter-spacing:-0.155px;left:464.10px;">Texas Appraisal Management</div>
<div class="t" id="t84" style="top:500.76px;font-size:10.75px;line-height:15px;color:#2a68b8;left:604.50px;">13</div>
<div class="t" id="t85" style="top:500.76px;font-size:10.75px;line-height:15px;color:#e00b1a;left:650.40px;">12</div>
<div class="t" id="t86" style="top:500.76px;font-size:10.75px;line-height:15px;color:#2b9a3e;left:696.70px;">0</div>
<div class="t" id="t87" style="top:526.23px;font-size:10.75px;line-height:15px;color:#4f5b76;letter-spacing:-0.225px;left:464.10px;">Bob Acme</div>
<div class="t" id="t88" style="top:526.23px;font-size:10.75px;line-height:15px;color:#2a68b8;left:604.50px;">10</div>
<div class="t" id="t89" style="top:526.23px;font-size:10.75px;line-height:15px;color:#e00b1a;left:650.40px;">9</div>
<div class="t" id="t90" style="top:526.23px;font-size:10.75px;line-height:15px;color:#2b9a3e;left:696.70px;">0</div>
<div class="t" id="t91" style="top:551.70px;font-size:10.75px;line-height:15px;color:#4f5b76;letter-spacing:-0.240px;left:464.10px;transform-origin:0 50%;transform:scaleX(0.9812);">AAA Appraisers</div>
<div class="t" id="t92" style="top:551.70px;font-size:10.75px;line-height:15px;color:#2a68b8;left:604.50px;">9</div>
<div class="t" id="t93" style="top:551.70px;font-size:10.75px;line-height:15px;color:#e00b1a;left:650.40px;">5</div>
<div class="t" id="t94" style="top:551.70px;font-size:10.75px;line-height:15px;color:#2b9a3e;left:696.70px;">0</div>
<div class="t" id="t95" style="top:231.50px;font-size:20px;line-height:28px;color:#4f5b76;left:858.20px;letter-spacing:0.3px;-webkit-text-stroke:0.3px #4f5b76;">1460</div>
<div class="t" id="t96" style="top:238.00px;font-size:10.5px;line-height:15px;color:#4f5b76;letter-spacing:-0.217px;left:912.50px;-webkit-text-stroke:0.4px #4f5b76;">Order Comments</div>
<div class="t" id="t97" style="top:265.80px;font-size:11px;line-height:15px;color:#4f5b76;letter-spacing:-0.251px;left:857.60px;transform-origin:0 50%;transform:scaleX(0.9711);">Category</div>
<div class="t" id="t98" style="top:265.80px;font-size:11px;line-height:15px;color:#4f5b76;letter-spacing:-0.253px;right:13.45px;transform-origin:100% 50%;transform:scaleX(0.9345);">Order</div>
<div class="t" id="t99" style="top:292.90px;font-size:10.75px;line-height:15px;color:#4f5b76;letter-spacing:-0.131px;left:867.70px;">Client</div>
<div class="t" id="t100" style="top:292.90px;font-size:10.75px;line-height:15px;color:#4f5b76;right:13.20px;">648</div>
<div class="t" id="t101" style="top:316.70px;font-size:10.75px;line-height:15px;color:#4f5b76;letter-spacing:-0.246px;left:867.70px;">Vendor</div>
<div class="t" id="t102" style="top:316.70px;font-size:10.75px;line-height:15px;color:#4f5b76;right:13.20px;">428</div>
<div class="t" id="t103" style="top:340.50px;font-size:10.75px;line-height:15px;color:#4f5b76;letter-spacing:-0.252px;left:867.70px;transform-origin:0 50%;transform:scaleX(0.9814);">Reviewer</div>
<div class="t" id="t104" style="top:340.50px;font-size:10.75px;line-height:15px;color:#4f5b76;right:13.20px;">0</div>
<div class="t" id="t105" style="top:364.70px;font-size:10.75px;line-height:15px;color:#4f5b76;letter-spacing:-0.242px;left:867.70px;transform-origin:0 50%;transform:scaleX(0.9774);">Other</div>
<div class="t" id="t106" style="top:364.70px;font-size:10.75px;line-height:15px;color:#4f5b76;right:13.20px;">384</div>
<div class="t" id="t107" style="top:390.30px;font-size:20px;line-height:28px;color:#4f5b76;left:874.40px;-webkit-text-stroke:0.3px #4f5b76;">0</div>
<div class="t" id="t108" style="top:396.10px;font-size:10.5px;line-height:15px;color:#4f5b76;letter-spacing:-0.176px;left:909.50px;-webkit-text-stroke:0.4px #4f5b76;">Reminders</div>
<div class="t" id="t109" style="top:429.80px;font-size:10.75px;line-height:15px;color:#4f5b76;font-weight:700;letter-spacing:-0.069px;left:857.60px;">My</div>
<div class="t" id="t110" style="top:429.80px;font-size:10.75px;line-height:15px;color:#e00b1a;right:13.50px;">0</div>
<div class="t" id="t111" style="top:453.70px;font-size:10.75px;line-height:15px;color:#4f5b76;font-weight:700;letter-spacing:-0.254px;left:857.60px;transform-origin:0 50%;transform:scaleX(0.9213);">Expired</div>
<div class="t" id="t112" style="top:453.70px;font-size:10.75px;line-height:15px;color:#e00b1a;right:13.50px;">0</div>
<div class="t" id="t113" style="top:490.60px;font-size:20px;line-height:28px;color:#4f5b76;left:866.40px;-webkit-text-stroke:0.3px #4f5b76;">0</div>
<div class="t" id="t114" style="top:496.50px;font-size:10.5px;line-height:15px;color:#4f5b76;letter-spacing:-0.152px;left:895.30px;-webkit-text-stroke:0.4px #4f5b76;">High Risk Orders</div>
<div class="t" id="t115" style="top:533.00px;font-size:20px;line-height:28px;color:#4f5b76;left:863.60px;-webkit-text-stroke:0.3px #4f5b76;">0</div>
<div class="t" id="t116" style="top:539.00px;font-size:10.5px;line-height:15px;color:#4f5b76;letter-spacing:-0.242px;left:888.00px;-webkit-text-stroke:0.4px #4f5b76;">Unread Vendor SMS</div>
<div class="b" style="left:453px;top:557.6px;width:373.8px;height:6.4px;background:#fff;border-radius:0 0 0 4px;"></div>
</body></html>
